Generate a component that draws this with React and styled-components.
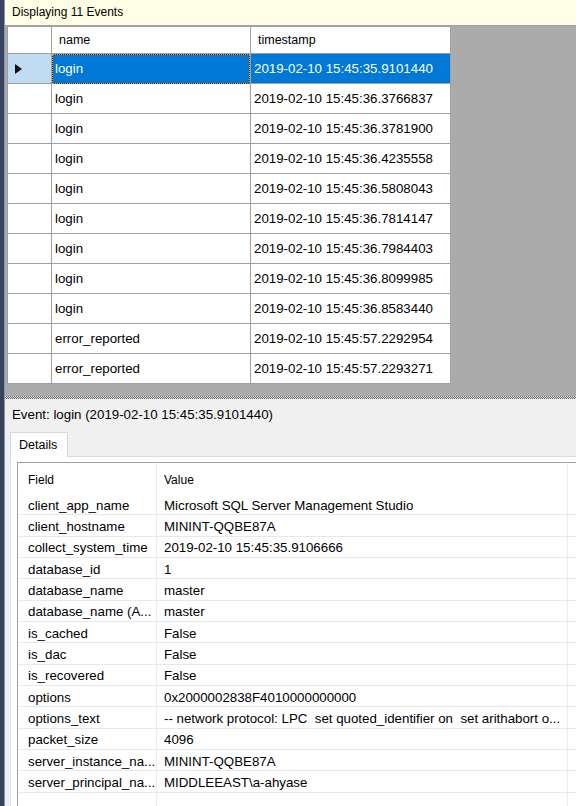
import React from "react";
import styled, { createGlobalStyle } from "styled-components";

const events = [
  ["login", "2019-02-10 15:45:35.9101440"],
  ["login", "2019-02-10 15:45:36.3766837"],
  ["login", "2019-02-10 15:45:36.3781900"],
  ["login", "2019-02-10 15:45:36.4235558"],
  ["login", "2019-02-10 15:45:36.5808043"],
  ["login", "2019-02-10 15:45:36.7814147"],
  ["login", "2019-02-10 15:45:36.7984403"],
  ["login", "2019-02-10 15:45:36.8099985"],
  ["login", "2019-02-10 15:45:36.8583440"],
  ["error_reported", "2019-02-10 15:45:57.2292954"],
  ["error_reported", "2019-02-10 15:45:57.2293271"],
];

const fields = [
  ["client_app_name", "Microsoft SQL Server Management Studio"],
  ["client_hostname", "MININT-QQBE87A"],
  ["collect_system_time", "2019-02-10 15:45:35.9106666"],
  ["database_id", "1"],
  ["database_name", "master"],
  ["database_name (A...", "master"],
  ["is_cached", "False"],
  ["is_dac", "False"],
  ["is_recovered", "False"],
  ["options", "0x2000002838F4010000000000"],
  ["options_text", "-- network protocol: LPC  set quoted_identifier on  set arithabort o..."],
  ["packet_size", "4096"],
  ["server_instance_na...", "MININT-QQBE87A"],
  ["server_principal_na...", "MIDDLEEAST\\a-ahyase"],
];

const App = () => {
  return (
    <>
      <GlobalStyle />
      <Window>
        <Strip />
        <Main>
          <InfoBar>Displaying 11 Events</InfoBar>
          <GridArea>
            <EventGrid>
              <GridRow>
                <RowHead />
                <HeadCell>name</HeadCell>
                <HeadCell>timestamp</HeadCell>
              </GridRow>
              {events.map(([name, ts], i) => (
                <GridRow key={i}>
                  <RowHead $selected={i === 0}>
                    {i === 0 && (
                      <svg width="7" height="10" viewBox="0 0 7 10">
                        <polygon points="0,0 7,5 0,10" fill="#111" />
                      </svg>
                    )}
                  </RowHead>
                  <Cell $selected={i === 0} $focused={i === 0}>
                    {name}
                  </Cell>
                  <Cell $selected={i === 0}>{ts}</Cell>
                </GridRow>
              ))}
            </EventGrid>
          </GridArea>
          <Splitter />
          <DetailPane>
            <EventTitle>Event: login (2019-02-10 15:45:35.9101440)</EventTitle>
            <TabStrip>
              <Tab>Details</Tab>
            </TabStrip>
            <TabPanel>
              <PropGrid>
                <PropHeader>
                  <PropHeadCell $pad={10}>Field</PropHeadCell>
                  <PropHeadCell $pad={7}>Value</PropHeadCell>
                  <PropHeadCell />
                </PropHeader>
                {fields.map(([f, v]) => (
                  <PropRow key={f}>
                    <PropCell $pad={10}>{f}</PropCell>
                    <PropCell $pad={7}>{v}</PropCell>
                    <PropCell />
                  </PropRow>
                ))}
                <PropFiller>
                  <PropCell />
                  <PropCell />
                  <PropCell />
                </PropFiller>
              </PropGrid>
            </TabPanel>
          </DetailPane>
        </Main>
      </Window>
    </>
  );
};

export default App;

const GlobalStyle = createGlobalStyle`
  html, body {
    margin: 0;
    padding: 0;
    background: #f0f0f0;
  }
  body {
    font-family: "Liberation Sans", Arial, sans-serif;
    color: #000;
  }
`;

const Window = styled.div`
  display: flex;
  width: 576px;
  height: 806px;
  overflow: hidden;
`;

const Strip = styled.div`
  width: 5px;
  flex-shrink: 0;
  background: #36445f;
  border-right: 1px solid #8a93a6;
  box-sizing: border-box;
`;

const Main = styled.div`
  flex: 1;
  display: flex;
  flex-direction: column;
  min-width: 0;
`;

const InfoBar = styled.div`
  height: 25px;
  line-height: 25px;
  padding-left: 7px;
  font-size: 12px;
  background: #fefee4;
  border-bottom: 1px solid #a0a0a0;
`;

const GridArea = styled.div`
  height: 370px;
  background: #ababab;
  padding-left: 2px;
  box-sizing: border-box;
`;

const EventGrid = styled.div`
  display: inline-flex;
  flex-direction: column;
  border-top: 1px solid #a0a0a0;
  border-left: 1px solid #a0a0a0;
  font-size: 13.3px;
`;

const GridRow = styled.div`
  display: grid;
  grid-template-columns: 44px 199px 200px;
  height: 30px;

  &:first-child {
    height: 27px;
  }
`;

const RowHead = styled.div`
  display: flex;
  align-items: center;
  padding-left: 7px;
  background: ${(p) => (p.$selected ? "#c0dcf3" : "#fff")};
  border-right: 1px solid #a0a0a0;
  border-bottom: 1px solid #a0a0a0;
`;

const HeadCell = styled.div`
  display: flex;
  align-items: center;
  padding-left: 7px;
  font-size: 12.5px;
  background: #fff;
  border-right: 1px solid #a0a0a0;
  border-bottom: 1px solid #a0a0a0;
`;

const Cell = styled.div`
  position: relative;
  display: flex;
  align-items: center;
  padding-left: 3px;
  white-space: nowrap;
  background: ${(p) => (p.$selected ? "#0078d7" : "#fff")};
  color: ${(p) => (p.$selected ? "#fff" : "#000")};
  border-right: 1px solid #a0a0a0;
  border-bottom: 1px solid #a0a0a0;

  ${(p) =>
    p.$focused &&
    `
    &::before {
      content: "";
      position: absolute;
      inset: 0 0 -1px 0;
      border: 1px solid #3b2a12;
    }
    &::after {
      content: "";
      position: absolute;
      inset: 0 0 -1px 0;
      border: 1px dotted #f0a040;
    }
  `}
`;

const Splitter = styled.div`
  height: 3px;
  background: conic-gradient(#6e6e6e 25%, #d8d8d8 0 50%, #6e6e6e 0 75%, #d8d8d8 0) 0 0 / 2px 2px;
`;

const DetailPane = styled.div`
  flex: 1;
  display: flex;
  flex-direction: column;
  background: #f0f0f0;
  min-height: 0;
`;

const EventTitle = styled.div`
  height: 26px;
  line-height: 28px;
  padding: 2px 0 0 7px;
  font-size: 13.3px;
`;

const TabStrip = styled.div`
  display: flex;
  padding: 5px 0 0 5px;
`;

const Tab = styled.div`
  position: relative;
  z-index: 1;
  width: 58px;
  height: 25px;
  line-height: 25px;
  margin-bottom: -1px;
  padding-left: 8px;
  box-sizing: border-box;
  font-size: 12.5px;
  background: #fcfcfc;
  border: 1px solid #d9d9d9;
  border-bottom: none;
`;

const TabPanel = styled.div`
  flex: 1;
  display: flex;
  flex-direction: column;
  margin-left: 5px;
  padding: 5px 0 0 6px;
  background: #fff;
  border-top: 1px solid #d9d9d9;
  border-left: 1px solid #e3e3e3;
  min-height: 0;
`;

const PropGrid = styled.div`
  flex: 1;
  display: flex;
  flex-direction: column;
  border-top: 1px solid #a0a0a0;
  border-left: 1px solid #a0a0a0;
  font-size: 13.3px;
`;

const PropRowBase = styled.div`
  display: grid;
  grid-template-columns: 139px 411px 1fr;
`;

const PropHeader = styled(PropRowBase)`
  height: 31px;
  font-size: 12px;
`;

const PropRow = styled(PropRowBase)`
  height: 21.33px;
  border-bottom: 1px solid #e8e8e8;
  box-sizing: border-box;
`;

const PropFiller = styled(PropRowBase)`
  flex: 1;
`;

const PropHeadCell = styled.div`
  display: flex;
  align-items: center;
  padding: 3px 0 0 ${(p) => p.$pad || 0}px;
  border-right: 1px solid #ececec;

  &:last-child {
    border-right: none;
  }
`;

const PropCell = styled.div`
  display: flex;
  align-items: center;
  padding: 2px 0 0 ${(p) => p.$pad || 0}px;
  white-space: pre;
  overflow: hidden;
  border-right: 1px solid #ececec;

  &:last-child {
    border-right: none;
  }
`;
